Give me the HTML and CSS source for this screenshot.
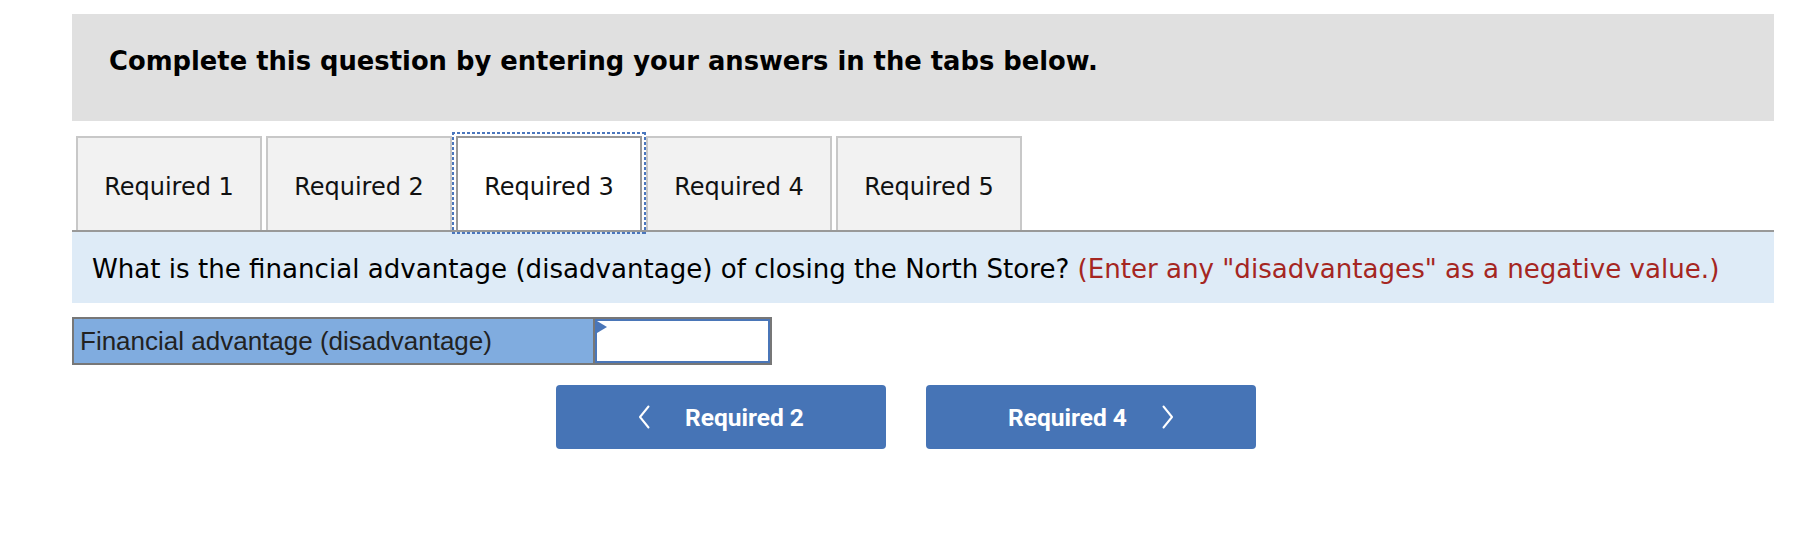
FILE: index.html
```html
<!DOCTYPE html>
<html lang="en">
<head>
<meta charset="utf-8">
<title>Question</title>
<link rel="stylesheet" href="styles.css">
</head>
<body>
<div class="page">
  <div class="header">Complete this question by entering your answers in the tabs below.</div>
  <div class="tabs">
    <div class="tab">Required 1</div>
    <div class="tab">Required 2</div>
    <div class="tab active">Required 3</div>
    <div class="tab">Required 4</div>
    <div class="tab">Required 5</div>
  </div>
  <div class="question">What is the financial advantage (disadvantage) of closing the North Store?&nbsp;<span class="hint">(Enter any "disadvantages" as a negative value.)</span></div>
  <div class="answer-row">
    <div class="label">Financial advantage (disadvantage)</div>
    <div class="input"><span class="marker"></span></div>
  </div>
  <div class="nav">
    <button class="btn">
      <svg class="chev" viewBox="0 0 12 24" width="12" height="24"><path d="M10.5 1.5 L2 12 L10.5 22.5" fill="none" stroke="#fff" stroke-width="2" stroke-linecap="round" stroke-linejoin="round"/></svg>
      <span>Required 2</span>
    </button>
    <button class="btn">
      <span>Required 4</span>
      <svg class="chev" viewBox="0 0 12 24" width="12" height="24"><path d="M1.5 1.5 L10 12 L1.5 22.5" fill="none" stroke="#fff" stroke-width="2" stroke-linecap="round" stroke-linejoin="round"/></svg>
    </button>
  </div>
</div>
</body>
</html>
```
FILE: styles.css
```css
html, body {
  margin: 0;
  padding: 0;
  background: #ffffff;
}

.page {
  margin-left: 72px;
  width: 1702px;
  padding-top: 14px;
  font-family: "DejaVu Sans", Verdana, sans-serif;
  color: #000;
}

.header {
  height: 107px;
  background: #e0e0e0;
  display: flex;
  align-items: center;
  padding-left: 37px;
  padding-bottom: 13px;
  box-sizing: border-box;
  font-weight: bold;
  font-size: 25.8px;
}

.tabs {
  margin-top: 15px;
  display: flex;
  gap: 4px;
  padding-left: 4px;
  border-bottom: 2px solid #999999;
}

.tab {
  width: 186px;
  height: 94px;
  box-sizing: border-box;
  border: 2px solid #c8c8c8;
  border-bottom: none;
  background: #f2f2f2;
  display: flex;
  align-items: center;
  justify-content: center;
  padding-top: 5px;
  font-size: 24px;
  color: #111;
}

.tab.active {
  position: relative;
  background: #ffffff;
  border-color: #999999;
}

.tab.active::after {
  content: "";
  position: absolute;
  left: -6px;
  right: -6px;
  top: -6px;
  bottom: -4px;
  background:
    repeating-linear-gradient(90deg, #4a76bd 0 3px, transparent 3px 5px) left top / 100% 2px no-repeat,
    repeating-linear-gradient(90deg, #4a76bd 0 3px, transparent 3px 5px) left bottom / 100% 2px no-repeat,
    repeating-linear-gradient(180deg, #4a76bd 0 3px, transparent 3px 5px) left top / 2px 100% no-repeat,
    repeating-linear-gradient(180deg, #4a76bd 0 3px, transparent 3px 5px) right top / 2px 100% no-repeat;
}

.question {
  height: 71px;
  background: #deebf7;
  display: flex;
  align-items: center;
  padding-left: 20px;
  padding-top: 3px;
  box-sizing: border-box;
  font-size: 26.1px;
  white-space: nowrap;
}

.hint {
  color: #a52622;
}

.answer-row {
  margin-top: 14px;
  width: 700px;
  height: 48px;
  box-sizing: border-box;
  border: 2px solid #777777;
  display: flex;
}

.label {
  width: 521px;
  box-sizing: border-box;
  background: #80acdf;
  border-right: 2px solid #777777;
  display: flex;
  align-items: center;
  padding-left: 6px;
  font-family: "Liberation Sans", Arial, sans-serif;
  font-size: 26px;
  color: #222;
}

.input {
  flex: 1;
  position: relative;
  background: #ffffff;
  border: 2px solid #4a76b8;
}

.marker {
  position: absolute;
  left: 0;
  top: 0;
  width: 0;
  height: 0;
  border-top: 6px solid transparent;
  border-bottom: 6px solid transparent;
  border-left: 10px solid #4a76b8;
}

.nav {
  margin-top: 20px;
  margin-left: 484px;
  display: flex;
  gap: 40px;
}

.btn {
  width: 330px;
  height: 64px;
  border: none;
  border-radius: 4px;
  background: #4674b6;
  color: #fff;
  display: flex;
  align-items: center;
  justify-content: center;
  gap: 35px;
  font-family: Roboto, "Liberation Sans", sans-serif;
  font-weight: 700;
  font-size: 24.5px;
  padding: 0;
}

.chev {
  display: block;
}
```
